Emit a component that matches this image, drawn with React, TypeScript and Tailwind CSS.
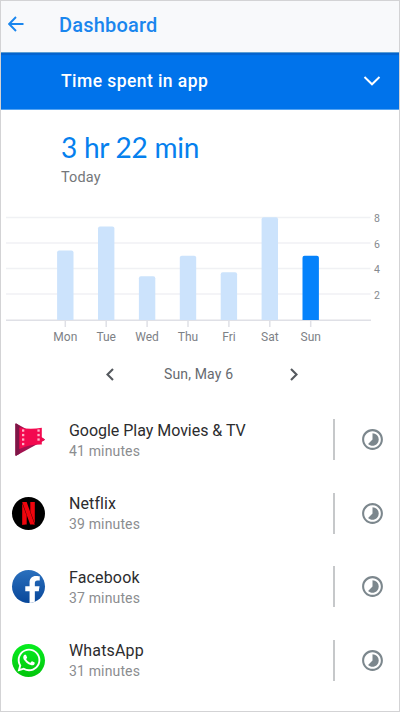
import { FaFacebookF, FaWhatsapp } from "react-icons/fa";
import { MdTimelapse } from "react-icons/md";
import { SiNetflix } from "react-icons/si";

const days = [
  { label: "Mon", top: 250.5 },
  { label: "Tue", top: 226.5 },
  { label: "Wed", top: 276.3 },
  { label: "Thu", top: 255.8 },
  { label: "Fri", top: 272.3 },
  { label: "Sat", top: 217.3 },
  { label: "Sun", top: 255.8 },
];

const gridLines = [
  { label: "8", y: 217.5 },
  { label: "6", y: 243 },
  { label: "4", y: 268.5 },
  { label: "2", y: 294 },
];

const PlayMoviesIcon = () => (
  <svg viewBox="0 0 33 33" className="size-[33px]">
    <path d="M4.2 0.6 Q3.4 0.2 3.4 1.2 V32 Q3.4 33.2 4.5 32.6 L32.4 17.3 Q33.3 16.6 32.4 15.9 Z" fill="#a3124f" />
    <path d="M4.2 0.6 Q3.4 0.2 3.4 1.2 V32 Q3.4 33.2 4.5 32.6 L7.6 30.8 V2.8 Z" fill="#7d1647" />
    <path d="M7.4 4.5 Q18 7 29.8 4.7 V14.3 L32 15.9 Q33 16.6 32 17.3 L29.8 18.6 V21.6 Q18 21.3 7.4 26 Z" fill="#f3094f" />
    {[6.4, 10.9, 15.4, 19.9].map((y) => (
      <rect key={y} x="10" y={y} width="2.3" height="2.3" fill="#ffb3c9" />
    ))}
    {[6.4, 10.9, 15.4].map((y) => (
      <rect key={y} x="25.4" y={y} width="2.3" height="2.3" fill="#ffb3c9" />
    ))}
  </svg>
);

const NetflixIcon = () => (
  <div className="flex size-[33px] items-center justify-center rounded-full bg-black">
    <SiNetflix className="size-[23px] text-[#f0050d]" />
  </div>
);

const FacebookIcon = () => (
  <div className="flex size-[33px] items-end justify-end overflow-hidden rounded-full bg-linear-to-b from-[#2a70bd] to-[#08479a] pr-[4px]">
    <FaFacebookF className="h-[27px] w-[17px] text-white" />
  </div>
);

const WhatsAppIcon = () => (
  <div className="flex size-[33px] items-center justify-center rounded-full bg-linear-to-b from-[#08ee20] to-[#02c50b]">
    <FaWhatsapp className="size-[26px] text-white" />
  </div>
);

const apps = [
  { name: "Google Play Movies & TV", time: "41 minutes", icon: <PlayMoviesIcon />, tracking: "tracking-[-0.03px]" },
  { name: "Netflix", time: "39 minutes", icon: <NetflixIcon />, tracking: "tracking-[0.1px]" },
  { name: "Facebook", time: "37 minutes", icon: <FacebookIcon />, tracking: "tracking-[0.15px]" },
  { name: "WhatsApp", time: "31 minutes", icon: <WhatsAppIcon />, tracking: "tracking-[0.15px]" },
];

const UsageChart = () => (
  <svg viewBox="1 205 398 145" className="block h-[145px] w-[398px]">
    {gridLines.map((line) => (
      <g key={line.label}>
        <path d={`M6 ${line.y}H370.5`} stroke="#f0f1f4" strokeWidth="1.5" />
        <text x="374" y={line.y + 4.7} fontSize="10.5" fill="#85898e">
          {line.label}
        </text>
      </g>
    ))}
    <path d="M6 320.3H371" stroke="#dfe0e6" strokeWidth="1.5" />
    {days.map((day, i) => {
      const x = 65.3 + i * 40.9;
      return (
        <g key={day.label}>
          <path d={`M${x} 321V327`} stroke="#dfe0e6" strokeWidth="1.5" />
          <path
            d={`M${x - 8.2} 320V${day.top + 2}q0-2 2-2h12.4q2 0 2 2V320z`}
            fill={day.label === "Sun" ? "#0582fb" : "#cce3fc"}
          />
          <text x={x} y="341.3" fontSize="12" textAnchor="middle" fill="#7d8186">
            {day.label}
          </text>
        </g>
      );
    })}
  </svg>
);

export default function App() {
  return (
    <div className="flex h-[712px] w-[400px] flex-col overflow-hidden border border-[#d3d3d5] bg-white font-[Roboto,sans-serif]">
      <header className="flex h-[51px] shrink-0 items-center bg-[#f8f9fb] pl-[7px] text-[#1a86ee]">
        <svg viewBox="0 0 16 16" className="mb-[5px] h-4 w-4 fill-none stroke-current" strokeWidth="1.9">
          <path d="M15.5 8H1.5M8 1L1.2 8L8 15" />
        </svg>
        <h1 className="mb-[3px] ml-[35px] text-[20px] leading-6 font-medium tracking-[0.2px]">Dashboard</h1>
      </header>

      <div className="flex h-[58px] shrink-0 items-center justify-between border-t border-b border-t-[#5c9fd4] border-b-[#55a4f2] bg-[#0073eb] pr-[18px] pl-[60px] text-white shadow-[inset_0_2px_1px_#0563ce]">
        <span className="text-[17.5px] leading-6 font-medium tracking-[0.43px]">Time spent in app</span>
        <svg viewBox="0 0 18 10" className="h-[10px] w-[18px] fill-none stroke-current" strokeWidth="1.9">
          <path d="M1.5 1L9 8.3L16.5 1" />
        </svg>
      </div>

      <div className="flex h-[95px] shrink-0 flex-col pt-[20px] pl-[60px]">
        <div className="font-[Lato,sans-serif] text-[28px] leading-[34px] tracking-[-0.25px] text-[#0580ee]">
          3 hr 22 min
        </div>
        <div className="mt-[4px] text-[14.5px] leading-5 tracking-[0.15px] text-[#74777a]">Today</div>
      </div>

      <UsageChart />

      <div className="flex h-[48px] shrink-0 items-center pl-[105px] text-[#55595e]">
        <svg viewBox="0 0 8 13" className="h-[13px] w-2 fill-none stroke-current" strokeWidth="2.1">
          <path d="M7 1L1.5 6.5L7 12" />
        </svg>
        <span className="ml-[50px] w-[72px] text-[14px] leading-5 tracking-[0.15px] whitespace-nowrap text-[#666a6f]">
          Sun, May 6
        </span>
        <svg viewBox="0 0 8 13" className="ml-[54px] h-[13px] w-2 fill-none stroke-current" strokeWidth="2.1">
          <path d="M1 1L6.5 6.5L1 12" />
        </svg>
      </div>

      <ul className="pt-[5px]">
        {apps.map((app) => (
          <li key={app.name} className="flex h-[73.5px] items-center pl-[11px]">
            {app.icon}
            <div className="ml-[24px] w-[264px] pt-[3px]">
              <div className={`text-[16px] leading-5 text-[#2c2c2e] ${app.tracking}`}>{app.name}</div>
              <div className="text-[14px] leading-[21px] tracking-[0.15px] text-[#8b8d8f]">{app.time}</div>
            </div>
            <div className="h-[41px] w-[2px] bg-[#c6c8ca]" />
            <MdTimelapse className="ml-[25px] size-[25px] text-[#7c878d]" />
          </li>
        ))}
      </ul>
    </div>
  );
}
